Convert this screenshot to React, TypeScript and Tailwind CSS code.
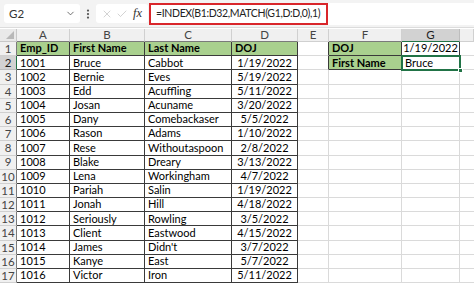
import React from 'react';
import { ChevronDown, EllipsisVertical, X, Check } from 'lucide-react';

const rows: string[][] = [
  ['Emp_ID', 'First Name', 'Last Name', 'DOJ'],
  ['1001', 'Bruce', 'Cabbot', '1/19/2022'],
  ['1002', 'Bernie', 'Eves', '5/19/2022'],
  ['1003', 'Edd', 'Acuffling', '5/11/2022'],
  ['1004', 'Josan', 'Acuname', '3/20/2022'],
  ['1005', 'Dany', 'Comebackaser', '5/5/2022'],
  ['1006', 'Rason', 'Adams', '1/10/2022'],
  ['1007', 'Rese', 'Withoutaspoon', '2/8/2022'],
  ['1008', 'Blake', 'Dreary', '3/13/2022'],
  ['1009', 'Lena', 'Workingham', '4/7/2022'],
  ['1010', 'Pariah', 'Salin', '1/19/2022'],
  ['1011', 'Jonah', 'Hill', '4/18/2022'],
  ['1012', 'Seriously', 'Rowling', '3/5/2022'],
  ['1013', 'Client', 'Eastwood', '4/15/2022'],
  ['1014', 'James', "Didn't", '3/7/2022'],
  ['1015', 'Kanye', 'East', '5/7/2022'],
  ['1016', 'Victor', 'Iron', '5/11/2022'],
];

const cols = ['A', 'B', 'C', 'D', 'E', 'F', 'G', ''];

const App: React.FC = () => {
  return (
    <div className="w-[474px] h-[285px] overflow-hidden bg-white text-[11px] text-black" style={{ fontFamily: 'Lato, "Open Sans", sans-serif' }}>
      {/* formula bar */}
      <div className="h-[28px] bg-[#f3f3f3] flex items-center pl-[4px] border-b border-[#dcdcdc]">
        <div className="w-[76px] h-[19px] bg-white rounded-[3px] flex items-center pl-[5px] pr-[4px] text-[11.5px] text-[#333]">
          <span className="flex-1">G2</span>
          <ChevronDown size={11} strokeWidth={1.8} className="text-[#555]" />
        </div>
        <div className="w-[16px] flex justify-center">
          <EllipsisVertical size={12} strokeWidth={2.5} className="text-[#555]" />
        </div>
        <div className="w-[52px] h-[19px] bg-white rounded-[3px] flex items-center gap-[3px] pl-[5px]">
          <X size={12} strokeWidth={1.2} className="text-[#b5b5b5]" />
          <Check size={12} strokeWidth={1.2} className="text-[#b5b5b5]" />
          <span className="italic text-[12.5px] text-[#333] ml-[2px]" style={{ fontFamily: '"Liberation Serif", serif' }}>fx</span>
        </div>
        <div className="flex-1 h-[22px] bg-white ml-[1px] flex items-center">
          <div className="w-[179px] h-[22px] border-2 border-[#d9262b] flex items-center pl-[5px] text-[10.5px] tracking-[-0.35px] text-[#222] whitespace-nowrap">
            =INDEX(B1:D32,MATCH(G1,D:D,0),1)
          </div>
        </div>
      </div>

      {/* grid */}
      <div className="grid grid-cols-[17px_53px_75px_87px_66px_31px_73px_58px_1fr] grid-rows-[13px] auto-rows-[14.2px] mt-[1px]">
        <div className="bg-[#e9e9e9] border-r border-b border-[#c8c8c8] relative">
          <div className="absolute right-[2px] bottom-[2px] w-0 h-0 border-l-[8px] border-l-transparent border-b-[8px] border-b-[#b8b8b8]" />
        </div>
        {cols.map((c, k) => (
          <div
            key={k}
            className={`flex items-center justify-center border-r border-b text-[11.5px] ${
              c === 'G'
                ? 'bg-[#d2d2d2] border-b-[#217346] border-r-[#bdbdbd] text-[#1e1e1e]'
                : ['A', 'B', 'C', 'D', 'F'].includes(c)
                ? 'bg-[#f0f0f0] border-r-[#d0d0d0] border-b-[#7a7a7a] text-[#444]'
                : 'bg-[#f0f0f0] border-[#d0d0d0] text-[#444]'
            }`}
          >
            {c}
          </div>
        ))}

        {rows.map((r, i) => {
          const n = i + 1;
          const head = n === 1;
          return (
            <React.Fragment key={n}>
              <div
                className={`flex items-center justify-center border-r border-b text-[11.5px] ${
                  n === 2 ? 'bg-[#d2d2d2] border-r-[#217346] border-b-[#bdbdbd] text-[#1e1e1e]' : 'bg-[#f0f0f0] border-r-[#7a7a7a] border-b-[#d0d0d0] text-[#444]'
                }`}
              >
                {n}
              </div>
              {r.map((v, j) => (
                <div
                  key={j}
                  className={`flex items-center border-r border-b border-[#3a3a3a] px-[3px] whitespace-nowrap overflow-hidden ${
                    head ? 'bg-[#a9d08e] font-bold' : ''
                  } ${j === 3 && !head ? 'justify-center' : ''}`}
                >
                  {v}
                </div>
              ))}
              <div className={`border-r border-b border-b-[#dadada] ${n <= 2 ? 'border-r-[#3a3a3a]' : 'border-r-[#dadada]'}`} />
              {n === 1 && (
                <>
                  <div className="flex items-center border-r border-b border-[#3a3a3a] bg-[#a9d08e] font-bold px-[3px]">DOJ</div>
                  <div className="flex items-center justify-center border-r border-b border-[#3a3a3a]">1/19/2022</div>
                </>
              )}
              {n === 2 && (
                <>
                  <div className="flex items-center border-r border-b border-[#3a3a3a] bg-[#a9d08e] font-bold px-[3px] whitespace-nowrap">First Name</div>
                  <div className="relative flex items-center px-[3px] outline-2 outline-[#217346] -outline-offset-1">
                    Bruce
                    <div className="absolute -right-[3px] -bottom-[3px] w-[5px] h-[5px] bg-[#217346] border border-white" />
                  </div>
                </>
              )}
              {n > 2 && (
                <>
                  <div className="border-r border-b border-[#dadada]" />
                  <div className="border-r border-b border-[#dadada]" />
                </>
              )}
              <div className="border-b border-[#dadada]" />
            </React.Fragment>
          );
        })}
      </div>
    </div>
  );
};

export default App;
